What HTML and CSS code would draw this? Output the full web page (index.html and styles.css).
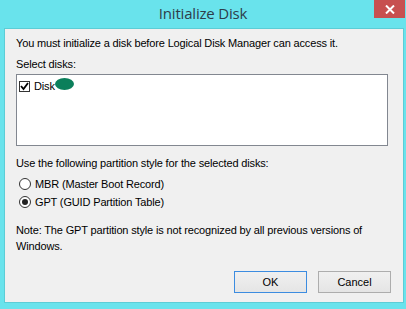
FILE: index.html
```html
<!DOCTYPE html>
<html>
  <head>
    <title>Initialize Disk</title>
    <link rel="stylesheet" href="styles.css">
  </head>
  <body>
    <!-- Title bar -->
    <div class="titlebar">
      <span class="title">Initialize Disk</span>
      <div class="close-button">
        <svg width="10" height="9" viewBox="0 0 10 9">
          <path d="M1 0.5 L9 8.5 M9 0.5 L1 8.5" stroke="#fff" stroke-width="2" />
        </svg>
      </div>
    </div>

    <!-- Dialog body -->
    <div class="panel">
      <p class="line first">You must initialize a disk before Logical Disk Manager can access it.</p>
      <p class="line select-label">Select disks:</p>

      <div class="listbox">
        <div class="list-item">
          <span class="checkbox">
            <svg width="9" height="9" viewBox="0 0 9 9">
              <path d="M1 4 L3.5 7 L8 1" stroke="#000" stroke-width="1.8" fill="none" />
            </svg>
          </span>
          <span class="disk-name">Disk</span>
          <span class="redacted"></span>
        </div>
      </div>

      <p class="line style-label">Use the following partition style for the selected disks:</p>
      <div class="radio-row">
        <span class="radio"></span>
        <span>MBR (Master Boot Record)</span>
      </div>
      <div class="radio-row second">
        <span class="radio checked"></span>
        <span>GPT (GUID Partition Table)</span>
      </div>

      <p class="line note">Note: The GPT partition style is not recognized by all previous versions of<br />Windows.</p>

      <div class="buttons">
        <button class="button button-default">OK</button>
        <button class="button">Cancel</button>
      </div>
    </div>
  </body>
</html>
```

FILE: styles.css
```css
body {
  margin: 0;
  padding: 0;
  width: 406px;
  height: 309px;
  background-color: #69e3ec;
  font-family: "Liberation Sans", Arial, sans-serif;
  font-size: 11px;
  letter-spacing: -0.15px;
  color: #000;
  overflow: hidden;
}
.titlebar {
  height: 28px;
  position: relative;
  display: flex;
  justify-content: center;
  align-items: center;
}
.title {
  font-family: "Open Sans", "Noto Sans", sans-serif;
  font-size: 15px;
  letter-spacing: -0.2px;
  color: #2e3d4a;
  margin-top: -3px;
}
.close-button {
  position: absolute;
  top: 0;
  right: 1px;
  width: 31px;
  height: 18px;
  background-color: #c75050;
  display: flex;
  justify-content: center;
  align-items: center;
}
.panel {
  margin: 0 2px 0 4px;
  height: 275px;
  border: 1px solid #5ccdd6;
  background-color: #f0f0f0;
  padding: 6px 0 0 11px;
  box-sizing: border-box;
}
.line {
  margin: 0;
  line-height: 16px;
  white-space: nowrap;
}
.select-label {
  margin-top: 5px;
}
.listbox {
  margin-top: 2px;
  width: 372px;
  height: 72px;
  box-sizing: border-box;
  border: 1px solid #828790;
  background-color: #fff;
  padding: 4px 0 0 2px;
}
.list-item {
  display: flex;
  align-items: center;
  height: 14px;
}
.checkbox {
  width: 11px;
  height: 11px;
  box-sizing: border-box;
  border: 1px solid #333;
  background-color: #fff;
  display: flex;
  justify-content: center;
  align-items: center;
  margin-right: 4px;
}
.redacted {
  display: inline-block;
  width: 19px;
  height: 12px;
  border-radius: 50%;
  background-color: #0b7f5b;
  margin-top: -5px;
}
.style-label {
  margin-top: 9px;
}
.radio-row {
  display: flex;
  align-items: center;
  height: 16px;
  margin-top: 5px;
  padding-left: 3px;
  white-space: nowrap;
}
.radio-row.second {
  margin-top: 2px;
}
.radio {
  width: 12px;
  height: 12px;
  box-sizing: border-box;
  border: 1px solid #333;
  border-radius: 50%;
  background-color: #fff;
  margin-right: 4px;
  display: flex;
  justify-content: center;
  align-items: center;
}
.radio.checked::after {
  content: "";
  width: 6px;
  height: 6px;
  border-radius: 50%;
  background-color: #222;
}
.note {
  margin-top: 12px;
}
.buttons {
  display: flex;
  justify-content: flex-end;
  gap: 11px;
  margin-top: 17px;
  padding-right: 12px;
}
.button {
  width: 73px;
  height: 22px;
  font-family: "Liberation Sans", Arial, sans-serif;
  font-size: 11px;
  color: #000;
  border: 1px solid #adadad;
  background: linear-gradient(#f0f0f0, #e5e5e5);
  padding: 0;
}
.button-default {
  border-color: #3c8ce0;
}
```
